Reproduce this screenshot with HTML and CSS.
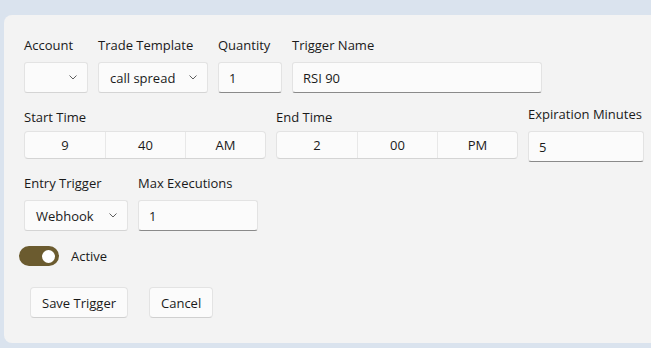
FILE: index.html
```html
<!DOCTYPE html>
<html>
<head>
<meta charset="utf-8">
<link rel="stylesheet" href="styles.css">
</head>
<body>
<div class="card">
  <div class="row row1">
    <div class="field w-account">
      <div class="label">Account</div>
      <div class="combo"><span class="val"></span><svg class="chev" width="8" height="5" viewBox="0 0 8 5"><path d="M0.5 0.5 L4 4 L7.5 0.5" fill="none" stroke="#5f5f5f" stroke-width="1"/></svg></div>
    </div>
    <div class="field w-template">
      <div class="label">Trade Template</div>
      <div class="combo"><span class="val">call spread</span><svg class="chev" width="8" height="5" viewBox="0 0 8 5"><path d="M0.5 0.5 L4 4 L7.5 0.5" fill="none" stroke="#5f5f5f" stroke-width="1"/></svg></div>
    </div>
    <div class="field w-qty">
      <div class="label">Quantity</div>
      <div class="input">1</div>
    </div>
    <div class="field w-name">
      <div class="label">Trigger Name</div>
      <div class="input">RSI 90</div>
    </div>
  </div>

  <div class="row row2">
    <div class="field w-time">
      <div class="label tight">Start Time</div>
      <div class="picker"><span>9</span><span>40</span><span>AM</span></div>
    </div>
    <div class="field w-time">
      <div class="label tight">End Time</div>
      <div class="picker"><span>2</span><span>00</span><span>PM</span></div>
    </div>
    <div class="field w-exp raised">
      <div class="label">Expiration Minutes</div>
      <div class="input">5</div>
    </div>
  </div>

  <div class="row row3">
    <div class="field w-entry">
      <div class="label">Entry Trigger</div>
      <div class="combo"><span class="val">Webhook</span><svg class="chev" width="8" height="5" viewBox="0 0 8 5"><path d="M0.5 0.5 L4 4 L7.5 0.5" fill="none" stroke="#5f5f5f" stroke-width="1"/></svg></div>
    </div>
    <div class="field w-max">
      <div class="label">Max Executions</div>
      <div class="input">1</div>
    </div>
  </div>

  <div class="toggle-row">
    <div class="toggle"><div class="knob"></div></div>
    <span class="toggle-label">Active</span>
  </div>

  <div class="buttons">
    <button class="btn btn-save">Save Trigger</button>
    <button class="btn btn-cancel">Cancel</button>
  </div>
</div>
</body>
</html>
```

FILE: styles.css
```css
* { box-sizing: border-box; }
html, body {
  margin: 0;
  padding: 0;
  background: #dae3ee;
  width: 651px;
  height: 348px;
  overflow: hidden;
  font-family: "Open Sans", "Noto Sans", sans-serif;
  font-size: 13px;
  color: #1a1a1a;
}
.card {
  margin: 15px 0 0 4px;
  width: 647px;
  height: 328px;
  background: #f3f3f3;
  border-radius: 8px 0 0 8px;
  padding: 20px 0 0 20px;
}
.row {
  display: flex;
  gap: 10px;
  align-items: flex-start;
}
.field {
  display: flex;
  flex-direction: column;
}
.label {
  height: 20px;
  line-height: 20px;
  margin-bottom: 7px;
  white-space: nowrap;
}
.label.tight { margin-bottom: 4px; }
.raised { margin-top: -3px; }
.row2 { margin-top: 14px; }
.row3 { margin-top: 11px; }

.w-account { width: 64px; }
.w-template { width: 110px; }
.w-qty { width: 64px; }
.w-name { width: 250px; }
.w-time { width: 242px; }
.w-exp { width: 116px; }
.w-entry { width: 104px; }
.w-max { width: 120px; }

.combo {
  height: 31px;
  background: #fbfbfb;
  border: 1px solid #e3e3e3;
  border-bottom-color: #d4d4d4;
  border-radius: 3px;
  display: flex;
  align-items: center;
  padding: 0 10px 0 11px;
  gap: 8px;
}
.combo .val { flex: 1; white-space: nowrap; }
.combo .chev { flex: none; }

.input {
  height: 31px;
  background: #fbfbfb;
  border: 1px solid #e3e3e3;
  border-bottom: 1px solid #8a8a8a;
  border-radius: 3px;
  display: flex;
  align-items: center;
  padding: 0 10px;
}

.picker {
  height: 28px;
  background: #fbfbfb;
  border: 1px solid #e3e3e3;
  border-bottom-color: #d4d4d4;
  border-radius: 4px;
  display: grid;
  grid-template-columns: 1fr 1fr 1fr;
}
.picker span {
  display: flex;
  align-items: center;
  justify-content: center;
  border-left: 1px solid #e8e8e8;
}
.picker span:first-child { border-left: none; }

.toggle-row {
  display: flex;
  align-items: center;
  gap: 12px;
  margin: 15px 0 0 -5px;
}
.toggle {
  width: 40px;
  height: 20px;
  border-radius: 10px;
  background: #6b5b2f;
  display: flex;
  align-items: center;
  justify-content: flex-end;
  padding-right: 4px;
}
.knob {
  width: 13px;
  height: 13px;
  border-radius: 50%;
  background: #ffffff;
}

.buttons {
  display: flex;
  gap: 21px;
  margin: 21px 0 0 6px;
}
.btn {
  font-family: inherit;
  font-size: 13px;
  color: #1a1a1a;
  height: 31px;
  background: #fbfbfb;
  border: 1px solid #e3e3e3;
  border-bottom-color: #d0d0d0;
  border-radius: 4px;
  padding: 0 11px;
}
.btn-save { width: 98px; }
.btn-cancel { width: 64px; }
```
